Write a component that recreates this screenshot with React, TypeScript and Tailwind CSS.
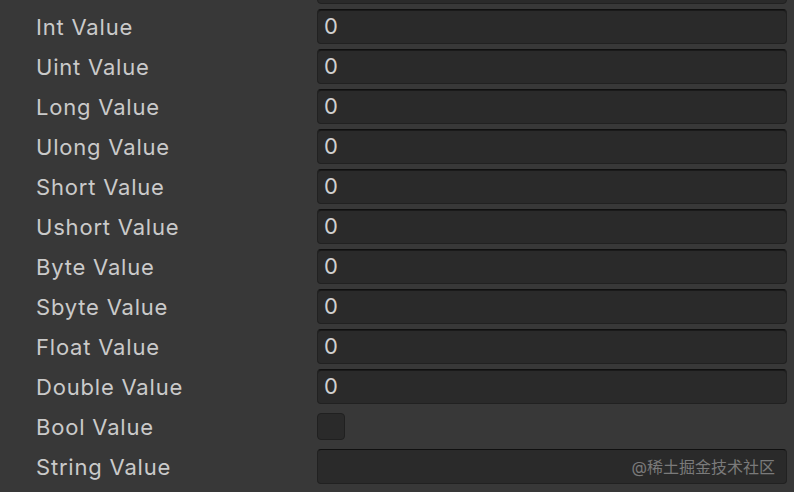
const rows = [
  "Int Value",
  "Uint Value",
  "Long Value",
  "Ulong Value",
  "Short Value",
  "Ushort Value",
  "Byte Value",
  "Sbyte Value",
  "Float Value",
  "Double Value",
];

function Field({ children }: { children?: React.ReactNode }) {
  return (
    <div className="flex-1 h-[35px] rounded-[4px] bg-[#2a2a2a] border border-[#212121] border-t-[#101010] shadow-[inset_0_1px_0_#1a1a1a] flex items-center pl-[6px] text-[22px] tracking-[0.8px] text-[#d0d0d0]">
      {children}
    </div>
  );
}

function Label({ text }: { text: string }) {
  return (
    <div className="w-[317px] pl-[36px] text-[22px] tracking-[0.8px] text-[#cacaca] leading-none">
      {text}
    </div>
  );
}

export default function App() {
  return (
    <div
      className="w-[794px] h-[492px] overflow-hidden bg-[#383838] relative"
      style={{ fontFamily: "Inter, 'Noto Sans', 'Noto Sans CJK SC', sans-serif" }}
    >
      <div className="flex flex-col gap-[5px] pt-[9px] pr-[7px]">
        <div className="absolute left-[317px] right-[7px] top-[-30px] h-[34px] rounded-[4px] bg-[#2a2a2a] border border-[#212121]" />
        {rows.map((r) => (
          <div key={r} className="flex items-center h-[35px]">
            <Label text={r} />
            <Field>0</Field>
          </div>
        ))}
        <div className="flex items-center h-[35px]">
          <Label text="Bool Value" />
          <div className="w-[28px] h-[27px] rounded-[4px] bg-[#2a2a2a] border border-[#202020]" />
        </div>
        <div className="flex items-center h-[35px]">
          <Label text="String Value" />
          <div className="flex-1 h-[35px] rounded-[4px] bg-[#2a2a2a] border border-[#212121] border-t-[#101010] flex items-center justify-end pr-[11px] text-[16px] text-[#7a7a7a]">
            @稀土掘金技术社区
          </div>
        </div>
      </div>
    </div>
  );
}
